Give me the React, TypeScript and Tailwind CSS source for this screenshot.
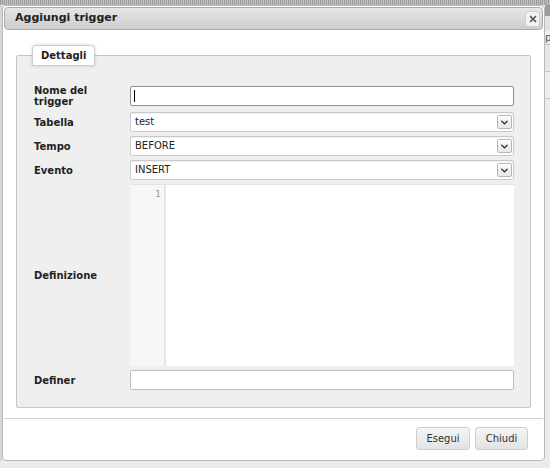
import { X, ChevronDown } from 'lucide-react';

const font = "font-['DejaVu_Sans',Verdana,sans-serif]";

function SelectBox({ value }: { value: string }) {
  return (
    <div className="flex h-[20px] flex-1 items-center justify-between rounded-[2px] border border-[#c9c9c9] bg-white pl-[4px] pr-[1px] shadow-[inset_0_1px_1px_rgba(0,0,0,0.06)]">
      <span className="text-[10px] leading-none text-[#222]">{value}</span>
      <span className="flex h-[14px] w-[15px] items-center justify-center rounded-[2px] border border-[#b5b5b5] bg-gradient-to-b from-[#fdfdfd] to-[#e6e6e6]">
        <ChevronDown className="h-[11px] w-[11px] text-[#222]" strokeWidth={3} />
      </span>
    </div>
  );
}

function Row({ label, children, className = 'h-[20px]' }: { label: React.ReactNode; children: React.ReactNode; className?: string }) {
  return (
    <div className={`flex items-center ${className}`}>
      <div className="w-[96px] shrink-0 text-[10px] font-bold leading-[11px] text-[#222]">{label}</div>
      {children}
    </div>
  );
}

export default function App() {
  return (
    <div className={`relative h-[468px] w-[550px] overflow-hidden bg-[#ececec] ${font}`}>
      {/* page behind the dialog */}
      <div className="h-[5px] w-full bg-[repeating-linear-gradient(90deg,#9a9a9a_0_1px,#c4c4c4_1px_2px)]" />
      <div className="absolute right-0 top-[5px] flex w-[5px] flex-col">
        <div className="h-[11px] bg-[#9c9c9c]" />
        <div className="h-[14px] bg-[#e2e2e2]" />
        <div className="flex h-[14px] items-center bg-[#efefef] text-[10px] text-[#555]">p</div>
        <div className="h-px bg-[#bdbdbd]" />
        <div className="h-[26px] bg-[#e6e6e6]" />
        <div className="h-px bg-[#c4c4c4]" />
        <div className="h-[26px] bg-[#ededed]" />
        <div className="h-px bg-[#c4c4c4]" />
      </div>
      <div className="absolute left-0 top-[5px] h-[456px] w-[2px] bg-[#d6d6d6]" />

      {/* dialog */}
      <div className="absolute left-[2px] top-[5px] flex h-[456px] w-[543px] flex-col rounded-[4px] border border-[#b9b9b9] bg-white px-[1px] pt-[1px]">
        <div className="flex h-[23px] items-center justify-between rounded-[4px] border border-[#ababab] bg-gradient-to-b from-[#e6e6e6] to-[#cdcdcd] pl-[10px] pr-[2px]">
          <span className="text-[11px] font-bold text-[#222]">Aggiungi trigger</span>
          <span className="flex h-[16px] w-[15px] items-center justify-center rounded-[3px] border border-[#d0d0d0] bg-[#f2f2f2]">
            <X className="h-[10px] w-[10px] text-[#555]" strokeWidth={4} />
          </span>
        </div>

        <fieldset className="mx-[12px] mt-[15px] h-[363px] rounded-[2px] border border-[#c6c6c6] bg-[#efefef] pl-[17px] pr-[16px]">
          <legend className="-ml-[2px] rounded-t-[4px] border border-[#cfcfcf] bg-white px-[8px] py-[4px] text-[10px] font-bold leading-[11px] text-[#222] shadow-[0_0_3px_rgba(0,0,0,0.2)]">
            Dettagli
          </legend>
          <div className="mt-[18px] flex flex-col gap-[4px]">
            <Row label={<>Nome del<br />trigger</>} className="h-[24px]">
              <div className="flex h-[20px] flex-1 items-center rounded-[2px] border border-[#8f8f8f] bg-white pl-[3px]">
                <span className="h-[12px] w-px bg-black" />
              </div>
            </Row>
            <Row label="Tabella">
              <SelectBox value="test" />
            </Row>
            <Row label="Tempo">
              <SelectBox value="BEFORE" />
            </Row>
            <Row label="Evento">
              <SelectBox value="INSERT" />
            </Row>
            <Row label="Definizione" className="h-[182px]">
              <div className="flex h-full flex-1 border-t border-[#e3e3e3] bg-white">
                <div className="w-[36px] border-r-2 border-[#e6e6e6] bg-[#f7f7f7] pr-[3px] pt-[3px] text-right text-[9px] text-[#999]">1</div>
                <div className="flex-1" />
              </div>
            </Row>
            <Row label="Definer">
              <div className="h-[20px] flex-1 rounded-[2px] border border-[#bdbdbd] bg-white" />
            </Row>
          </div>
        </fieldset>

        <div className="mt-[10px] flex justify-end gap-[5px] border-t border-[#cfcfcf] pr-[15px] pt-[8px]">
          <button type="button" className="h-[23px] w-[54px] rounded-[3px] border border-[#cfcfcf] bg-gradient-to-b from-[#f5f5f5] to-[#e3e3e3] text-[10px] text-[#333]">
            Esegui
          </button>
          <button type="button" className="h-[23px] w-[53px] rounded-[3px] border border-[#cfcfcf] bg-gradient-to-b from-[#f5f5f5] to-[#e3e3e3] text-[10px] text-[#333]">
            Chiudi
          </button>
        </div>
      </div>
    </div>
  );
}
